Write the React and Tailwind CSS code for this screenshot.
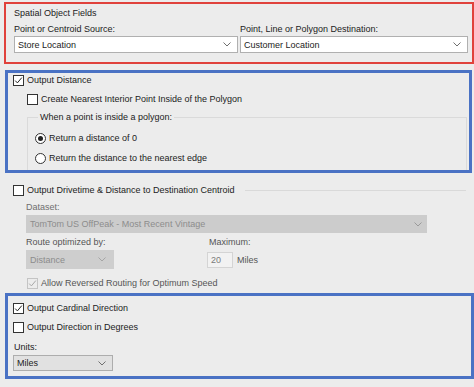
import React from "react";

const Chevron = ({ color = "#6f6f6f" }) => (
  <svg width="8" height="5" viewBox="0 0 8 5" className="shrink-0">
    <path d="M0.5 0.5 L4 4 L7.5 0.5" stroke={color} fill="none" strokeWidth="1" />
  </svg>
);

const Check = ({ checked, disabled }) => (
  <span
    className={
      disabled
        ? "w-[11px] h-[11px] shrink-0 border border-[#c4c4c4] bg-[#ececec] flex items-center justify-center"
        : "w-[11px] h-[11px] shrink-0 border border-[#333333] bg-white flex items-center justify-center"
    }
  >
    {checked && (
      <svg width="9" height="9" viewBox="0 0 9 9">
        <path
          d="M1.2 4.6 L3.4 6.9 L7.8 1.6"
          stroke={disabled ? "#a8a8a8" : "#222"}
          strokeWidth="1"
          fill="none"
        />
      </svg>
    )}
  </span>
);

const Radio = ({ checked }) => (
  <span className="w-[11px] h-[11px] shrink-0 rounded-full border border-[#333333] bg-white flex items-center justify-center">
    {checked && <span className="w-[5px] h-[5px] rounded-full bg-[#222]" />}
  </span>
);

export default function App() {
  return (
    <div className="w-[474px] h-[387px] overflow-hidden bg-[#ececec] text-[9px] leading-[12px] text-[#222] font-['Liberation_Sans',Arial,sans-serif]">
      {/* Spatial Object Fields */}
      <div className="mt-[2px] ml-[4px] w-[470px] h-[62px] border-2 border-[#e0423c] pl-[8px] pr-[4px] pt-[3px]">
        <div className="h-[12px]">Spatial Object Fields</div>
        <div className="flex gap-[2px] mt-[4px]">
          <div className="w-[224px]">
            <div className="h-[12px]">Point or Centroid Source:</div>
            <div className="mt-[1px] h-[17px] bg-white border border-[#b0b0b0] flex items-center justify-between pl-[3px] pr-[6px]">
              <span>Store Location</span>
              <Chevron />
            </div>
          </div>
          <div className="w-[228px]">
            <div className="h-[12px]">Point, Line or Polygon Destination:</div>
            <div className="mt-[1px] h-[17px] bg-white border border-[#b0b0b0] flex items-center justify-between pl-[3px] pr-[6px]">
              <span>Customer Location</span>
              <Chevron />
            </div>
          </div>
        </div>
      </div>

      {/* Output Distance */}
      <div className="mt-[6px] ml-[5px] w-[467px] h-[103px] border-[3px] border-[#4a72c4] pl-[5px] pt-[1px] overflow-hidden">
        <div className="flex items-center gap-[3px] h-[12px]">
          <Check checked />
          <span>Output Distance</span>
        </div>
        <div className="flex items-center gap-[3px] h-[12px] mt-[7px] ml-[14px]">
          <Check />
          <span>Create Nearest Interior Point Inside of the Polygon</span>
        </div>
        <fieldset className="mt-[6px] ml-[14px] mr-[2px] border border-[#dadada] pl-[7px] pb-[20px]">
          <legend className="ml-[3px] px-[2px] leading-[12px]">When a point is inside a polygon:</legend>
          <div className="flex items-center gap-[3px] h-[12px] mt-[9px]">
            <Radio checked />
            <span>Return a distance of 0</span>
          </div>
          <div className="flex items-center gap-[3px] h-[12px] mt-[8px]">
            <Radio />
            <span>Return the distance to the nearest edge</span>
          </div>
        </fieldset>
      </div>

      {/* Drivetime */}
      <div className="mt-[11px] flex items-center h-[12px] pl-[13px] pr-[8px]">
        <Check />
        <span className="ml-[3px]">Output Drivetime &amp; Distance to Destination Centroid</span>
        <div className="flex-1 h-px bg-[#d9d9d9] ml-[10px]" />
      </div>
      <div className="pl-[26px]">
        <div className="mt-[5px] h-[12px] text-[#6f6f6f]">Dataset:</div>
        <div className="mt-[2px] w-[401px] h-[18px] bg-[#cccccc] text-[#8c8c8c] flex items-center justify-between pl-[4px] pr-[5px]">
          <span>TomTom US OffPeak - Most Recent Vintage</span>
          <Chevron color="#9a9a9a" />
        </div>
        <div className="mt-[3px] flex h-[12px] text-[#555]">
          <span className="w-[183px]">Route optimized by:</span>
          <span>Maximum:</span>
        </div>
        <div className="mt-[2px] flex items-start">
          <div className="w-[88px] h-[19px] bg-[#cecece] text-[#8c8c8c] flex items-center justify-between pl-[4px] pr-[8px]">
            <span>Distance</span>
            <Chevron color="#a5a5a5" />
          </div>
          <div className="ml-[93px] mt-[2px] w-[26px] h-[16px] bg-[#f2f2f2] border border-[#d4d4d4] text-[#7a7a7a] flex items-center pl-[3px]">
            20
          </div>
          <span className="ml-[4px] mt-[4px] text-[#555]">Miles</span>
        </div>
        <div className="mt-[8px] ml-[1px] flex items-center gap-[3px] h-[12px] text-[#555]">
          <Check checked disabled />
          <span>Allow Reversed Routing for Optimum Speed</span>
        </div>
      </div>

      {/* Cardinal Direction */}
      <div className="mt-[4px] ml-[5px] w-[469px] h-[86px] border-[3px] border-[#4a72c4] pl-[5px] pt-[6px] overflow-hidden">
        <div className="flex items-center gap-[3px] h-[12px]">
          <Check checked />
          <span>Output Cardinal Direction</span>
        </div>
        <div className="flex items-center gap-[3px] h-[12px] mt-[7px]">
          <Check />
          <span>Output Direction in Degrees</span>
        </div>
        <div className="mt-[8px] h-[12px] pl-[1px]">Units:</div>
        <div className="mt-[2px] w-[100px] h-[16px] bg-[#e1e1e1] border border-[#adadad] flex items-center justify-between pl-[3px] pr-[6px]">
          <span>Miles</span>
          <Chevron />
        </div>
      </div>
    </div>
  );
}
